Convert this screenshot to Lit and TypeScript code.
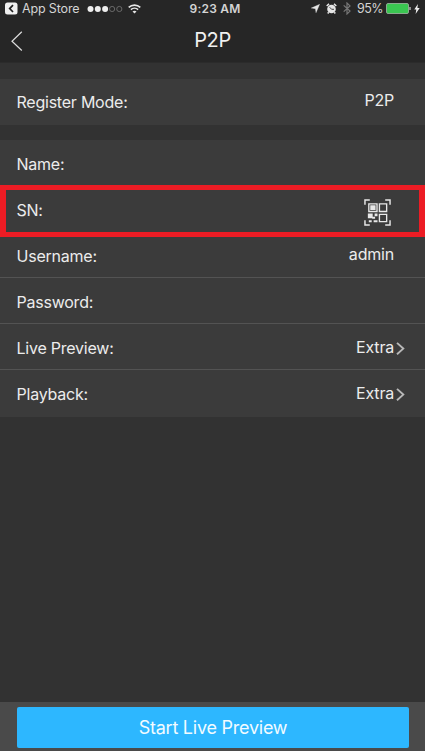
import { LitElement, html, css, svg, nothing } from "lit";
import { customElement, property } from "lit/decorators.js";

const base = css`
  :host {
    display: block;
    box-sizing: border-box;
    font-family: Inter, "Liberation Sans", sans-serif;
  }
  * { box-sizing: border-box; }
  svg { display: block; flex: none; }
`;

@customElement("status-bar")
class StatusBar extends LitElement {
  static styles = [base, css`
    .bar {
      display: grid;
      grid-template-columns: 1fr auto 1fr;
      align-items: center;
      height: 17px;
      padding: 0 5px;
      color: #d4d4d4;
      font-size: 12.5px;
      line-height: 17px;
      white-space: nowrap;
    }
    .side { display: flex; align-items: center; }
    .end { justify-content: flex-end; }
    .store { margin-left: 4px; letter-spacing: -0.15px; }
    .dots { margin-left: 8px; }
    .wifi { margin-left: 5px; }
    .time { font-weight: 600; font-size: 12px; letter-spacing: 0.2px; margin-left: 5px; }
    .pct { margin: 0 3px 0 6px; letter-spacing: -0.5px; }
    .alarm { margin-left: 6px; }
    .bt { margin-left: 6px; }
    .bolt { margin-left: 3px; }
  `];
  render() {
    return html`
      <div class="bar">
        <div class="side">
          <svg width="13" height="13" viewBox="0 0 13 13">
            <rect x="0" y="0.5" width="12.5" height="12" rx="2.5" fill="#f0f0f0" />
            <path d="M8 3.2 4.7 6.6 8 10" fill="none" stroke="#222" stroke-width="1.7" />
          </svg>
          <span class="store">App Store</span>
          <svg class="dots" width="36" height="8" viewBox="0 0 36 8">
            ${[0, 1, 2, 3, 4].map((i) => i < 3
              ? svg`<circle cx=${3.5 + i * 7.3} cy="4" r="3" fill="#eee" />`
              : svg`<circle cx=${3.5 + i * 7.2} cy="4" r="2.6" fill="none" stroke="#777" stroke-width="0.8" />`)}
          </svg>
          <svg class="wifi" width="13" height="10" viewBox="0 0 13 10" fill="none" stroke="#e6e6e6" stroke-width="1.6">
            <path d="M.7 3.4C4 .3 9 .3 12.3 3.4" />
            <path d="M2.9 5.7c2-1.9 5.2-1.9 7.2 0" />
            <path d="M4.5 7.4c1-1 3-1 4 0L6.5 9.6Z" fill="#e6e6e6" stroke="none" />
          </svg>
        </div>
        <span class="time">9:23 AM</span>
        <div class="side end">
          <svg width="9" height="9" viewBox="0 0 9 9"><path d="M8.7.2 5 8.8 4.4 4.7.2 4.1Z" fill="#e6e6e6" stroke="#e6e6e6" stroke-width=".3" /></svg>
          <svg class="alarm" width="11" height="11" viewBox="0 0 11 11">
            <circle cx="5.5" cy="6" r="4.3" fill="#e6e6e6" />
            <path d="M.7 3 3 .9M10.3 3 8 .9M2.7 9.2l-1 1.3M8.3 9.2l1 1.3" stroke="#e6e6e6" stroke-width="1.5" />
            <path d="M3.6 4.2 5.6 6.3H8" fill="none" stroke="#353535" stroke-width=".9" />
          </svg>
          <svg class="bt" width="8" height="13" viewBox="0 0 8 13">
            <path d="M.7 3.4 7 9.1 4 12V1L7 3.9.7 9.6" fill="none" stroke="#777" stroke-width="1.2" />
          </svg>
          <span class="pct">95%</span>
          <svg width="25" height="11" viewBox="0 0 25 11">
            <rect x=".5" y=".5" width="22" height="10" rx="1.5" fill="#3ac651" stroke="#a3b7a5" stroke-width=".8" />
            <path d="M24 4v3" stroke="#bbb" stroke-width="1.4" />
          </svg>
          <svg class="bolt" width="6" height="10" viewBox="0 0 6 10"><path d="M3.9 0 .3 5.6h2L1.6 10 5.7 4.1H3.4Z" fill="#eee" /></svg>
        </div>
      </div>`;
  }
}

@customElement("nav-header")
class NavHeader extends LitElement {
  static styles = [base, css`
    .nav {
      display: grid;
      grid-template-columns: 1fr auto 1fr;
      align-items: center;
      height: 46px;
      padding: 0 11px;
      color: #f0f0f0;
    }
    .back { margin-top: 2px; }
    .title { padding-bottom: 1px; font-size: 20px; line-height: 24px; letter-spacing: -0.4px; }
  `];
  render() {
    return html`
      <div class="nav">
        <svg class="back" width="12" height="20" viewBox="0 0 12 20"><path d="M10.8.8 1 10.3l9.8 9.2" fill="none" stroke="#ddd" stroke-width="1.2" /></svg>
        <span class="title">P2P</span>
      </div>`;
  }
}

@customElement("form-row")
class FormRow extends LitElement {
  @property() label = "";
  @property() value = "";
  @property() icon = "";
  static styles = [base, css`
    .row {
      display: flex;
      align-items: center;
      justify-content: space-between;
      height: 46px;
      padding: 0 20px 0 17px;
      background: #3b3b3b;
      color: #ececec;
      font-size: 16px;
      line-height: 20px;
      white-space: nowrap;
    }
    .label { letter-spacing: -0.23px; margin-left: -0.5px; }
    .end { display: flex; align-items: center; }
    .value { padding-bottom: 4px; letter-spacing: -0.2px; }
    .more { padding-bottom: 2px; }
    .slot { width: 11px; padding-left: 2px; }
    .scan { margin-right: 14px; margin-top: 5px; }
  `];
  render() {
    return html`
      <div class="row">
        <span class="label">${this.label}</span>
        <div class="end">
          ${this.value ? html`<span class="value ${this.icon}">${this.value}</span>` : nothing}
          ${this.icon === "scan" ? html`
            <svg class="scan" width="27" height="27" viewBox="0 0 28 28" fill="none" stroke="#e8e8e8">
              <path d="M1 6V1h5M22 1h5v5M27 22v5h-5M6 27H1v-5" stroke-width="1.5" />
              <path d="M5 5h8.5v8H5zM16 5h7.5v8H16zM16 16h7.5v7.5H16z" stroke-width="1.4" />
              <path d="M6.5 6.5H12v5H6.5zM4 15h5v5H4zM11 15h3v3h-3zM8.5 18.5h3v2h-3zM5 22h3v2H5zM10 22h4v2h-4z" fill="#e8e8e8" stroke="none" />
            </svg>` : html`
            <div class="slot">${this.icon === "more" ? html`
              <svg width="9" height="13" viewBox="0 0 9 13"><path d="M1 .9 7.3 6.6 1 12.3" fill="none" stroke="#b8b8b8" stroke-width="1.9" /></svg>` : nothing}
            </div>`}
        </div>
      </div>`;
  }
}

@customElement("app-root")
class AppRoot extends LitElement {
  static styles = [base, css`
    :host {
      display: flex;
      flex-direction: column;
      height: 751px;
      background: #323232;
      overflow: hidden;
    }
    .top { height: 63px; flex: none; background: #262626; border-bottom: 1px solid #2b2b2b; }
    .first { margin-top: 16px; }
    .group { margin-top: 15px; padding-top: 1px; background: #3b3b3b; }
    .line { position: relative; }
    .line::before {
      content: "";
      position: absolute;
      top: -2px;
      left: 0;
      right: 0;
      height: 1px;
      background: #535353;
    }
    .marked { position: relative; }
    .marked::after {
      content: "";
      position: absolute;
      inset: -2px 0 -4px;
      border: solid #ec1c24;
      border-width: 5px 6px;
      z-index: 1;
    }
    .foot {
      margin-top: auto;
      height: 49px;
      padding: 5px 16px 3px 17px;
      background: #4a4a4a;
    }
    .start {
      display: block;
      width: 100%;
      height: 41px;
      padding: 0;
      border: 0;
      border-radius: 2px;
      background: #2db7ff;
      color: #f2fbff;
      font: 18px/41px Inter, "Liberation Sans", sans-serif;
      letter-spacing: -0.24px;
    }
  `];
  render() {
    return html`
      <div class="top">
        <status-bar></status-bar>
        <nav-header></nav-header>
      </div>
      <form-row class="first" label="Register Mode:" value="P2P"></form-row>
      <div class="group">
        <form-row label="Name:"></form-row>
        <form-row class="marked" label="SN:" icon="scan"></form-row>
        <form-row label="Username:" value="admin"></form-row>
        <form-row class="line" label="Password:"></form-row>
        <form-row class="line" label="Live Preview:" value="Extra" icon="more"></form-row>
        <form-row class="line" label="Playback:" value="Extra" icon="more"></form-row>
      </div>
      <div class="foot"><button class="start">Start Live Preview</button></div>`;
  }
}
